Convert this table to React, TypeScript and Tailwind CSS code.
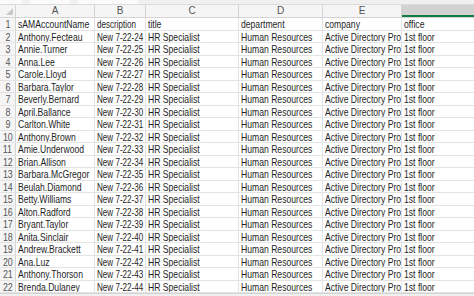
const names = [
  "Anthony.Fecteau",
  "Annie.Turner",
  "Anna.Lee",
  "Carole.Lloyd",
  "Barbara.Taylor",
  "Beverly.Bernard",
  "April.Ballance",
  "Carlton.White",
  "Anthony.Brown",
  "Amie.Underwood",
  "Brian.Allison",
  "Barbara.McGregor",
  "Beulah.Diamond",
  "Betty.Williams",
  "Alton.Radford",
  "Bryant.Taylor",
  "Anita.Sinclair",
  "Andrew.Brackett",
  "Ana.Luz",
  "Anthony.Thorson",
  "Brenda.Dulaney",
];

const cols = [
  { letter: "A", w: "w-[79px]" },
  { letter: "B", w: "w-[51px]" },
  { letter: "C", w: "w-[93px]" },
  { letter: "D", w: "w-[84px]" },
  { letter: "E", w: "w-[79px]" },
];

const header = ["sAMAccountName", "description", "title", "department", "company", "office"];

const rows = [
  header,
  ...names.map((n, i) => [
    n,
    `New 7-22-${24 + i}`,
    "HR Specialist",
    "Human Resources",
    "Active Directory Pro",
    "1st floor",
  ]),
];

// narrow text, like Excel's Aptos Narrow
const Narrow = ({ tight, children }: { tight?: boolean; children: string }) => (
  <span
    className={
      tight
        ? "inline-block origin-left scale-x-[0.77] whitespace-nowrap"
        : "inline-block origin-left scale-x-[0.82] whitespace-nowrap"
    }
  >
    {children}
  </span>
);

const App = () => {
  return (
    <main
      className="w-[474px] h-[296px] overflow-hidden bg-white text-[10.5px] text-[#1e1e1e]"
      style={{ fontFamily: '"Liberation Sans", Arial, sans-serif' }}
    >
      <div className="flex h-[5px] bg-[#f0f0f0] border-b border-[#dcdcdc] gap-x-[8px]">
        <div className="w-[22px] h-[4px] bg-[#fafafa]" />
        <div className="w-[40px] h-[4px] bg-[#fafafa]" />
        <div className="w-[60px] h-[4px] bg-[#fafafa]" />
      </div>

      <div className="flex h-[13px] bg-[#f5f5f5] border-b border-[#d4d4d4] text-[#555] text-[10px] leading-[12px]">
        <div className="w-[16px] shrink-0 border-r border-[#d4d4d4] relative">
          <span className="absolute right-[2px] bottom-[2px] w-0 h-0 border-l-[7px] border-l-transparent border-b-[7px] border-b-[#c8c8c8]" />
        </div>
        {cols.map((c) => (
          <div key={c.letter} className={`${c.w} shrink-0 border-r border-[#d4d4d4] text-center`}>
            {c.letter}
          </div>
        ))}
        <div className="flex-1 bg-[#d2d2d2] border-b-2 border-[#107c41]" />
      </div>

      {rows.map((r, i) => (
        <div key={i} className="flex h-[12.5px] border-b border-[#e3e3e3]">
          <div className="w-[16px] shrink-0 bg-[#f5f5f5] border-r border-[#d4d4d4] text-center text-[#555] leading-[12px]">
            <span className="inline-block scale-x-[0.85]">{i + 1}</span>
          </div>
          {cols.map((c, j) => (
            <div
              key={c.letter}
              className={`${c.w} shrink-0 overflow-hidden border-r border-[#e3e3e3] pl-[2px] leading-[12px]`}
            >
              <Narrow tight={j === 1}>{r[j]}</Narrow>
            </div>
          ))}
          <div className="flex-1 overflow-hidden pl-[2px] leading-[12px]">
            <Narrow>{r[5]}</Narrow>
          </div>
        </div>
      ))}

      <div className="h-[4px] bg-[#f0f0f0] border-t border-[#d4d4d4]" />
    </main>
  );
};

export default App;
